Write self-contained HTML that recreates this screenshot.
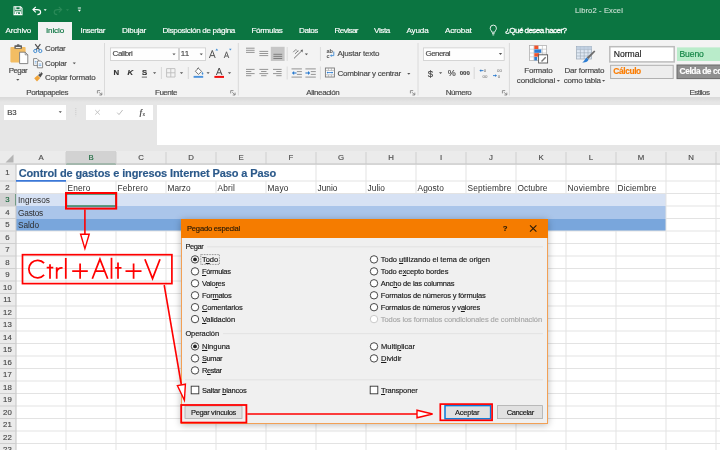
<!DOCTYPE html>
<html><head><meta charset="utf-8"><title>Libro2 - Excel</title>
<style>
html,body{margin:0;padding:0}
body{width:720px;height:450px;overflow:hidden;position:relative;background:#e6e6e6;font-family:"Liberation Sans",sans-serif}
.a{position:absolute;box-sizing:border-box}
.t{position:absolute;white-space:pre;font-family:"Liberation Sans",sans-serif;z-index:10;-webkit-text-stroke:0.16px}
svg{position:absolute;overflow:visible}

u{text-decoration-thickness:0.6px;text-underline-offset:0.8px}
.c{-webkit-text-stroke:0}

</style></head>
<body>
<!-- title bar + tabs -->
<div class="a" style="left:0;top:0;width:720px;height:40px;background:#0b7541"></div>
<div class="a" style="left:38px;top:21.5px;width:34px;height:19px;background:#f3f3f3"></div>
<!-- ribbon -->
<div class="a" style="left:0;top:40px;width:720px;height:56.5px;background:#f3f3f3"></div>
<div class="a" style="left:0;top:96.5px;width:720px;height:5px;background:linear-gradient(#d9d9d9,#dedede 50%,#e6e6e6)"></div>
<!-- formula bar -->
<div class="a" style="left:4px;top:104.5px;width:62px;height:15.5px;background:#fff"></div>
<div class="a" style="left:86px;top:104.5px;width:67px;height:15.5px;background:#fff"></div>
<div class="a" style="left:157px;top:104.5px;width:563px;height:40.5px;background:#fff"></div>
<!-- grid -->
<div class="a" id="grid" style="left:0;top:151px;width:720px;height:299px;background:#fff"></div>
<div class="a" style="left:0;top:151px;width:720px;height:13.5px;background:#ebebeb"></div>
<div class="a" style="left:0;top:151px;width:16px;height:299px;background:#ebebeb"></div>
<div class="a" style="left:66px;top:151px;width:50px;height:13.5px;background:#d2d2d2;border-bottom:2px solid #217346"></div>
<div class="a" style="left:0;top:193.5px;width:16px;height:12.5px;background:#d2d2d2;border-right:1.5px solid #217346"></div>
<div class="a" style="left:16px;top:193.5px;width:650px;height:12.5px;background:#d7e2f4"></div>
<div class="a" style="left:16px;top:206px;width:650px;height:12.5px;background:#aac5ea"></div>
<div class="a" style="left:16px;top:218.5px;width:650px;height:12.5px;background:#79a6dc"></div>
<svg width="720" height="450" style="left:0;top:0"><path d="M16 164H720" stroke="#e3e3e3"/><path d="M16 181H720" stroke="#e3e3e3"/><path d="M16 193.5H720" stroke="#e3e3e3"/><path d="M666 206.0H720" stroke="#e3e3e3"/><path d="M666 218.5H720" stroke="#e3e3e3"/><path d="M16 231.0H720" stroke="#e3e3e3"/><path d="M16 243.5H720" stroke="#e3e3e3"/><path d="M16 256.0H720" stroke="#e3e3e3"/><path d="M16 268.5H720" stroke="#e3e3e3"/><path d="M16 281.0H720" stroke="#e3e3e3"/><path d="M16 293.5H720" stroke="#e3e3e3"/><path d="M16 306.0H720" stroke="#e3e3e3"/><path d="M16 318.5H720" stroke="#e3e3e3"/><path d="M16 331.0H720" stroke="#e3e3e3"/><path d="M16 343.5H720" stroke="#e3e3e3"/><path d="M16 356.0H720" stroke="#e3e3e3"/><path d="M16 368.5H720" stroke="#e3e3e3"/><path d="M16 381.0H720" stroke="#e3e3e3"/><path d="M16 393.5H720" stroke="#e3e3e3"/><path d="M16 406.0H720" stroke="#e3e3e3"/><path d="M16 418.5H720" stroke="#e3e3e3"/><path d="M16 431.0H720" stroke="#e3e3e3"/><path d="M16 443.5H720" stroke="#e3e3e3"/><path d="M16 456.0H720" stroke="#e3e3e3"/><path d="M16 164V450" stroke="#c4c4c4"/><path d="M66 181V193.5M66 231V450" stroke="#e3e3e3"/><path d="M116 181V193.5M116 231V450" stroke="#e3e3e3"/><path d="M166 181V193.5M166 231V450" stroke="#e3e3e3"/><path d="M216 181V193.5M216 231V450" stroke="#e3e3e3"/><path d="M266 181V193.5M266 231V450" stroke="#e3e3e3"/><path d="M316 164V193.5M316 231V450" stroke="#e3e3e3"/><path d="M366 164V193.5M366 231V450" stroke="#e3e3e3"/><path d="M416 164V193.5M416 231V450" stroke="#e3e3e3"/><path d="M466 164V193.5M466 231V450" stroke="#e3e3e3"/><path d="M516 164V193.5M516 231V450" stroke="#e3e3e3"/><path d="M566 164V193.5M566 231V450" stroke="#e3e3e3"/><path d="M616 164V193.5M616 231V450" stroke="#e3e3e3"/><path d="M666 164V450" stroke="#e3e3e3"/><path d="M716 164V450" stroke="#e3e3e3"/><path d="M66 152V164" stroke="#cfcfcf"/><path d="M116 152V164" stroke="#cfcfcf"/><path d="M166 152V164" stroke="#cfcfcf"/><path d="M216 152V164" stroke="#cfcfcf"/><path d="M266 152V164" stroke="#cfcfcf"/><path d="M316 152V164" stroke="#cfcfcf"/><path d="M366 152V164" stroke="#cfcfcf"/><path d="M416 152V164" stroke="#cfcfcf"/><path d="M466 152V164" stroke="#cfcfcf"/><path d="M516 152V164" stroke="#cfcfcf"/><path d="M566 152V164" stroke="#cfcfcf"/><path d="M616 152V164" stroke="#cfcfcf"/><path d="M666 152V164" stroke="#cfcfcf"/><path d="M716 152V164" stroke="#cfcfcf"/><path d="M0 181H16" stroke="#cfcfcf"/><path d="M0 193.5H16" stroke="#cfcfcf"/><path d="M0 206.0H16" stroke="#cfcfcf"/><path d="M0 218.5H16" stroke="#cfcfcf"/><path d="M0 231.0H16" stroke="#cfcfcf"/><path d="M0 243.5H16" stroke="#cfcfcf"/><path d="M0 256.0H16" stroke="#cfcfcf"/><path d="M0 268.5H16" stroke="#cfcfcf"/><path d="M0 281.0H16" stroke="#cfcfcf"/><path d="M0 293.5H16" stroke="#cfcfcf"/><path d="M0 306.0H16" stroke="#cfcfcf"/><path d="M0 318.5H16" stroke="#cfcfcf"/><path d="M0 331.0H16" stroke="#cfcfcf"/><path d="M0 343.5H16" stroke="#cfcfcf"/><path d="M0 356.0H16" stroke="#cfcfcf"/><path d="M0 368.5H16" stroke="#cfcfcf"/><path d="M0 381.0H16" stroke="#cfcfcf"/><path d="M0 393.5H16" stroke="#cfcfcf"/><path d="M0 406.0H16" stroke="#cfcfcf"/><path d="M0 418.5H16" stroke="#cfcfcf"/><path d="M0 431.0H16" stroke="#cfcfcf"/><path d="M0 443.5H16" stroke="#cfcfcf"/><path d="M0 456.0H16" stroke="#cfcfcf"/><path d="M0 164H720" stroke="#c4c4c4"/><path d="M13.5 154.5V162.5H5.5Z" fill="#b4b4b4"/><path d="M16 180.8H66" stroke="#3b78d8" stroke-width="1.8"/><rect x="66.5" y="194" width="49.5" height="12" fill="none" stroke="#217346" stroke-width="1.3"/></svg>
<div class="a" style="left:181px;top:218.5px;width:366.5px;height:205.5px;background:#f0f0f0;border:1px solid #f2a055;box-shadow:0 1px 7px rgba(0,0,0,.28)"></div>
<div class="a" style="left:181px;top:218.5px;width:366.5px;height:19px;background:#f57c00"></div>
<svg width="720" height="450" style="left:0;top:0"><path d="M207 246.8H543M223 333.7H543M185 379.8H543" stroke="#e2e2e2"/><circle cx="195" cy="259.4" r="3.7" fill="#fff" stroke="#333" stroke-width="0.9"/><circle cx="195" cy="259.4" r="1.9" fill="#222"/><circle cx="374" cy="259.4" r="3.7" fill="#fff" stroke="#333" stroke-width="0.9"/><circle cx="195" cy="271.4" r="3.7" fill="#fff" stroke="#333" stroke-width="0.9"/><circle cx="374" cy="271.4" r="3.7" fill="#fff" stroke="#333" stroke-width="0.9"/><circle cx="195" cy="283.3" r="3.7" fill="#fff" stroke="#333" stroke-width="0.9"/><circle cx="374" cy="283.3" r="3.7" fill="#fff" stroke="#333" stroke-width="0.9"/><circle cx="195" cy="295.3" r="3.7" fill="#fff" stroke="#333" stroke-width="0.9"/><circle cx="374" cy="295.3" r="3.7" fill="#fff" stroke="#333" stroke-width="0.9"/><circle cx="195" cy="307.2" r="3.7" fill="#fff" stroke="#333" stroke-width="0.9"/><circle cx="374" cy="307.2" r="3.7" fill="#fff" stroke="#333" stroke-width="0.9"/><circle cx="195" cy="319.1" r="3.7" fill="#fff" stroke="#333" stroke-width="0.9"/><circle cx="374" cy="319.1" r="3.7" fill="#fff" stroke="#c4c4c4" stroke-width="0.9"/><circle cx="195" cy="346.4" r="3.7" fill="#fff" stroke="#333" stroke-width="0.9"/><circle cx="195" cy="346.4" r="1.9" fill="#222"/><circle cx="374" cy="346.4" r="3.7" fill="#fff" stroke="#333" stroke-width="0.9"/><circle cx="195" cy="358.4" r="3.7" fill="#fff" stroke="#333" stroke-width="0.9"/><circle cx="374" cy="358.4" r="3.7" fill="#fff" stroke="#333" stroke-width="0.9"/><circle cx="195" cy="370.4" r="3.7" fill="#fff" stroke="#333" stroke-width="0.9"/><rect x="191.2" y="386.2" width="7.6" height="7.6" fill="#fff" stroke="#333" stroke-width="0.9"/><rect x="370.2" y="386.2" width="7.6" height="7.6" fill="#fff" stroke="#333" stroke-width="0.9"/><rect x="200.8" y="254.6" width="18.6" height="9.8" fill="none" stroke="#555" stroke-width="0.7" stroke-dasharray="0.8 0.8"/><rect x="185" y="406" width="57" height="12.5" fill="#e1e1e1" stroke="#adadad" stroke-width="0.8"/><rect x="445" y="405.6" width="45.6" height="13.2" fill="#e1e1e1" stroke="#0a78d7" stroke-width="1.5"/><rect x="497.5" y="405.6" width="45" height="13" fill="#e1e1e1" stroke="#adadad" stroke-width="0.8"/><path d="M530 225.3l6.4 6.4M536.4 225.3l-6.4 6.4" stroke="#2a1a08" stroke-width="1.1"/></svg>
<div class="a" id="tx" style="left:0;top:0;width:720px;height:450px;z-index:10;will-change:transform;opacity:0.999">
<span class="t" style="left:575.00px;top:2.50px;height:15px;line-height:15px;font-size:7.5px;color:#c9dfd2;letter-spacing:0.153px;">Libro2 - Excel</span>
<span class="t" style="left:5.50px;top:22.50px;height:16px;line-height:16px;font-size:8.1px;color:#ffffff;letter-spacing:-0.186px;">Archivo</span>
<span class="t" style="left:46.00px;top:22.50px;height:16px;line-height:16px;font-size:8.1px;color:#0b7541;letter-spacing:-0.151px;">Inicio</span>
<span class="t" style="left:80.50px;top:22.50px;height:16px;line-height:16px;font-size:8.1px;color:#ffffff;letter-spacing:-0.369px;">Insertar</span>
<span class="t" style="left:122.00px;top:22.50px;height:16px;line-height:16px;font-size:8.1px;color:#ffffff;letter-spacing:-0.237px;">Dibujar</span>
<span class="t" style="left:162.50px;top:22.50px;height:16px;line-height:16px;font-size:8.1px;color:#ffffff;letter-spacing:-0.319px;">Disposición de página</span>
<span class="t" style="left:251.50px;top:22.50px;height:16px;line-height:16px;font-size:8.1px;color:#ffffff;letter-spacing:-0.342px;">Fórmulas</span>
<span class="t" style="left:299.00px;top:22.50px;height:16px;line-height:16px;font-size:8.1px;color:#ffffff;letter-spacing:-0.431px;">Datos</span>
<span class="t" style="left:334.50px;top:22.50px;height:16px;line-height:16px;font-size:8.1px;color:#ffffff;letter-spacing:-0.562px;">Revisar</span>
<span class="t" style="left:374.00px;top:22.50px;height:16px;line-height:16px;font-size:8.1px;color:#ffffff;letter-spacing:-0.372px;">Vista</span>
<span class="t" style="left:406.50px;top:22.50px;height:16px;line-height:16px;font-size:8.1px;color:#ffffff;letter-spacing:-0.163px;">Ayuda</span>
<span class="t" style="left:445.00px;top:22.50px;height:16px;line-height:16px;font-size:8.1px;color:#ffffff;letter-spacing:-0.201px;">Acrobat</span>
<span class="t" style="left:505.00px;top:22.50px;height:16px;line-height:16px;font-size:8.1px;color:#ffffff;letter-spacing:-0.591px;-webkit-text-stroke:0.3px;">¿Qué desea hacer?</span>
<span class="t" style="left:45.00px;top:41.30px;height:16px;line-height:16px;font-size:8px;color:#474747;letter-spacing:-0.289px;">Cortar</span>
<span class="t" style="left:45.00px;top:55.80px;height:16px;line-height:16px;font-size:8px;color:#474747;letter-spacing:-0.313px;">Copiar</span>
<span class="t" style="left:45.00px;top:70.00px;height:16px;line-height:16px;font-size:8px;color:#474747;letter-spacing:-0.173px;">Copiar formato</span>
<span class="t" style="left:8.80px;top:62.50px;height:16px;line-height:16px;font-size:8px;color:#474747;letter-spacing:-0.632px;">Pegar</span>
<span class="t" style="left:26.30px;top:84.50px;height:16px;line-height:16px;font-size:8px;color:#474747;letter-spacing:-0.455px;">Portapapeles</span>
<span class="t" style="left:155.00px;top:84.50px;height:16px;line-height:16px;font-size:8px;color:#474747;letter-spacing:-0.484px;">Fuente</span>
<span class="t" style="left:306.30px;top:84.50px;height:16px;line-height:16px;font-size:8px;color:#474747;letter-spacing:-0.392px;">Alineación</span>
<span class="t" style="left:445.80px;top:84.50px;height:16px;line-height:16px;font-size:8px;color:#474747;letter-spacing:-0.492px;">Número</span>
<span class="t" style="left:689.50px;top:84.50px;height:16px;line-height:16px;font-size:8px;color:#474747;letter-spacing:-0.509px;">Estilos</span>
<span class="t" style="left:112.50px;top:46.30px;height:16px;line-height:16px;font-size:8px;color:#474747;letter-spacing:-0.382px;">Calibri</span>
<span class="t" style="left:180.84px;top:46.30px;height:16px;line-height:16px;font-size:8px;color:#474747;letter-spacing:0.000px;">11</span>
<span class="t" style="left:113.43px;top:65.00px;height:16px;line-height:16px;font-size:7.8px;color:#333;letter-spacing:0.000px;font-weight:bold;">N</span>
<span class="t" style="left:127.43px;top:65.00px;height:16px;line-height:16px;font-size:7.8px;color:#333;letter-spacing:0.000px;font-weight:bold;font-style:italic;">K</span>
<span class="t" style="left:141.90px;top:64.60px;height:16px;line-height:16px;font-size:7.8px;color:#333;letter-spacing:0.000px;font-weight:bold;">S</span>
<span class="t" style="left:337.50px;top:46.30px;height:16px;line-height:16px;font-size:8px;color:#474747;letter-spacing:-0.205px;">Ajustar texto</span>
<span class="t" style="left:337.50px;top:65.70px;height:16px;line-height:16px;font-size:8px;color:#474747;letter-spacing:-0.263px;">Combinar y centrar</span>
<span class="t" style="left:425.50px;top:46.30px;height:16px;line-height:16px;font-size:8px;color:#474747;letter-spacing:-0.567px;">General</span>
<span class="t" style="left:427.85px;top:63.50px;height:19px;line-height:19px;font-size:9.5px;color:#444;letter-spacing:0.000px;">$</span>
<span class="t" style="left:447.74px;top:64.00px;height:18px;line-height:18px;font-size:9px;color:#444;letter-spacing:0.000px;">%</span>
<span class="t" style="left:459.74px;top:66.50px;height:12px;line-height:12px;font-size:6px;color:#444;letter-spacing:0.000px;font-weight:bold;">000</span>
<span class="t" style="left:524.30px;top:62.50px;height:16px;line-height:16px;font-size:8px;color:#474747;letter-spacing:-0.228px;">Formato</span>
<span class="t" style="left:516.80px;top:72.50px;height:16px;line-height:16px;font-size:8px;color:#474747;letter-spacing:-0.166px;">condicional</span>
<span class="t" style="left:564.50px;top:62.50px;height:16px;line-height:16px;font-size:8px;color:#474747;letter-spacing:-0.221px;">Dar formato</span>
<span class="t" style="left:563.80px;top:72.50px;height:16px;line-height:16px;font-size:8px;color:#474747;letter-spacing:-0.214px;">como tabla</span>
<span class="t" style="left:613.80px;top:45.80px;height:17px;line-height:17px;font-size:8.6px;color:#222;letter-spacing:-0.034px;">Normal</span>
<span class="t" style="left:679.50px;top:45.80px;height:17px;line-height:17px;font-size:8.6px;color:#128445;letter-spacing:-0.112px;">Bueno</span>
<span class="t" style="left:613.30px;top:63.30px;height:17px;line-height:17px;font-size:8.4px;color:#fa7d00;letter-spacing:-0.393px;font-weight:bold;">Cálculo</span>
<span class="t" style="left:679.50px;top:63.30px;height:17px;line-height:17px;font-size:8.4px;color:#ffffff;letter-spacing:-0.411px;font-weight:bold;">Celda de co</span>
<span class="t" style="left:7.13px;top:105.00px;height:16px;line-height:16px;font-size:7.8px;color:#444;letter-spacing:0.000px;">B3</span>
<span class="t" style="left:38.40px;top:149.60px;height:16px;line-height:16px;font-size:7.8px;color:#4c4c4c;letter-spacing:0.000px;">A</span>
<span class="t" style="left:88.40px;top:149.60px;height:16px;line-height:16px;font-size:7.8px;color:#1e6b41;letter-spacing:0.000px;">B</span>
<span class="t" style="left:138.18px;top:149.60px;height:16px;line-height:16px;font-size:7.8px;color:#4c4c4c;letter-spacing:0.000px;">C</span>
<span class="t" style="left:188.18px;top:149.60px;height:16px;line-height:16px;font-size:7.8px;color:#4c4c4c;letter-spacing:0.000px;">D</span>
<span class="t" style="left:238.40px;top:149.60px;height:16px;line-height:16px;font-size:7.8px;color:#4c4c4c;letter-spacing:0.000px;">E</span>
<span class="t" style="left:288.62px;top:149.60px;height:16px;line-height:16px;font-size:7.8px;color:#4c4c4c;letter-spacing:0.000px;">F</span>
<span class="t" style="left:337.96px;top:149.60px;height:16px;line-height:16px;font-size:7.8px;color:#4c4c4c;letter-spacing:0.000px;">G</span>
<span class="t" style="left:388.18px;top:149.60px;height:16px;line-height:16px;font-size:7.8px;color:#4c4c4c;letter-spacing:0.000px;">H</span>
<span class="t" style="left:439.91px;top:149.60px;height:16px;line-height:16px;font-size:7.8px;color:#4c4c4c;letter-spacing:0.000px;">I</span>
<span class="t" style="left:489.05px;top:149.60px;height:16px;line-height:16px;font-size:7.8px;color:#4c4c4c;letter-spacing:0.000px;">J</span>
<span class="t" style="left:538.40px;top:149.60px;height:16px;line-height:16px;font-size:7.8px;color:#4c4c4c;letter-spacing:0.000px;">K</span>
<span class="t" style="left:588.83px;top:149.60px;height:16px;line-height:16px;font-size:7.8px;color:#4c4c4c;letter-spacing:0.000px;">L</span>
<span class="t" style="left:637.75px;top:149.60px;height:16px;line-height:16px;font-size:7.8px;color:#4c4c4c;letter-spacing:0.000px;">M</span>
<span class="t" style="left:688.18px;top:149.60px;height:16px;line-height:16px;font-size:7.8px;color:#4c4c4c;letter-spacing:0.000px;">N</span>
<span class="t" style="left:5.23px;top:165.20px;height:16px;line-height:16px;font-size:7.8px;color:#4c4c4c;letter-spacing:0.000px;">1</span>
<span class="t" style="left:5.23px;top:179.60px;height:16px;line-height:16px;font-size:7.8px;color:#4c4c4c;letter-spacing:0.000px;">2</span>
<span class="t" style="left:5.23px;top:192.10px;height:16px;line-height:16px;font-size:7.8px;color:#1e6b41;letter-spacing:0.000px;">3</span>
<span class="t" style="left:5.23px;top:204.60px;height:16px;line-height:16px;font-size:7.8px;color:#4c4c4c;letter-spacing:0.000px;">4</span>
<span class="t" style="left:5.23px;top:217.10px;height:16px;line-height:16px;font-size:7.8px;color:#4c4c4c;letter-spacing:0.000px;">5</span>
<span class="t" style="left:5.23px;top:229.60px;height:16px;line-height:16px;font-size:7.8px;color:#4c4c4c;letter-spacing:0.000px;">6</span>
<span class="t" style="left:5.23px;top:242.10px;height:16px;line-height:16px;font-size:7.8px;color:#4c4c4c;letter-spacing:0.000px;">7</span>
<span class="t" style="left:5.23px;top:254.60px;height:16px;line-height:16px;font-size:7.8px;color:#4c4c4c;letter-spacing:0.000px;">8</span>
<span class="t" style="left:5.23px;top:267.10px;height:16px;line-height:16px;font-size:7.8px;color:#4c4c4c;letter-spacing:0.000px;">9</span>
<span class="t" style="left:3.06px;top:279.60px;height:16px;line-height:16px;font-size:7.8px;color:#4c4c4c;letter-spacing:0.000px;">10</span>
<span class="t" style="left:3.35px;top:292.10px;height:16px;line-height:16px;font-size:7.8px;color:#4c4c4c;letter-spacing:0.000px;">11</span>
<span class="t" style="left:3.06px;top:304.60px;height:16px;line-height:16px;font-size:7.8px;color:#4c4c4c;letter-spacing:0.000px;">12</span>
<span class="t" style="left:3.06px;top:317.10px;height:16px;line-height:16px;font-size:7.8px;color:#4c4c4c;letter-spacing:0.000px;">13</span>
<span class="t" style="left:3.06px;top:329.60px;height:16px;line-height:16px;font-size:7.8px;color:#4c4c4c;letter-spacing:0.000px;">14</span>
<span class="t" style="left:3.06px;top:342.10px;height:16px;line-height:16px;font-size:7.8px;color:#4c4c4c;letter-spacing:0.000px;">15</span>
<span class="t" style="left:3.06px;top:354.60px;height:16px;line-height:16px;font-size:7.8px;color:#4c4c4c;letter-spacing:0.000px;">16</span>
<span class="t" style="left:3.06px;top:367.10px;height:16px;line-height:16px;font-size:7.8px;color:#4c4c4c;letter-spacing:0.000px;">17</span>
<span class="t" style="left:3.06px;top:379.60px;height:16px;line-height:16px;font-size:7.8px;color:#4c4c4c;letter-spacing:0.000px;">18</span>
<span class="t" style="left:3.06px;top:392.10px;height:16px;line-height:16px;font-size:7.8px;color:#4c4c4c;letter-spacing:0.000px;">19</span>
<span class="t" style="left:3.06px;top:404.60px;height:16px;line-height:16px;font-size:7.8px;color:#4c4c4c;letter-spacing:0.000px;">20</span>
<span class="t" style="left:3.06px;top:417.10px;height:16px;line-height:16px;font-size:7.8px;color:#4c4c4c;letter-spacing:0.000px;">21</span>
<span class="t" style="left:3.06px;top:429.60px;height:16px;line-height:16px;font-size:7.8px;color:#4c4c4c;letter-spacing:0.000px;">22</span>
<span class="t" style="left:3.06px;top:442.10px;height:16px;line-height:16px;font-size:7.8px;color:#4c4c4c;letter-spacing:0.000px;">23</span>
<span class="t" style="left:18.70px;top:161.80px;height:22px;line-height:22px;font-size:11px;color:#2b598a;letter-spacing:-0.113px;font-weight:bold;">Control de gastos e ingresos Internet Paso a Paso</span>
<span class="t" style="left:67.50px;top:179.80px;height:17px;line-height:17px;font-size:8.3px;color:#2e2e2e;letter-spacing:0.172px;-webkit-text-stroke:0;">Enero</span>
<span class="t" style="left:117.50px;top:179.80px;height:17px;line-height:17px;font-size:8.3px;color:#2e2e2e;letter-spacing:0.205px;-webkit-text-stroke:0;">Febrero</span>
<span class="t" style="left:167.50px;top:179.80px;height:17px;line-height:17px;font-size:8.3px;color:#2e2e2e;letter-spacing:-0.013px;-webkit-text-stroke:0;">Marzo</span>
<span class="t" style="left:217.50px;top:179.80px;height:17px;line-height:17px;font-size:8.3px;color:#2e2e2e;letter-spacing:0.178px;-webkit-text-stroke:0;">Abril</span>
<span class="t" style="left:267.50px;top:179.80px;height:17px;line-height:17px;font-size:8.3px;color:#2e2e2e;letter-spacing:0.176px;-webkit-text-stroke:0;">Mayo</span>
<span class="t" style="left:317.50px;top:179.80px;height:17px;line-height:17px;font-size:8.3px;color:#2e2e2e;letter-spacing:0.031px;-webkit-text-stroke:0;">Junio</span>
<span class="t" style="left:367.50px;top:179.80px;height:17px;line-height:17px;font-size:8.3px;color:#2e2e2e;letter-spacing:0.084px;-webkit-text-stroke:0;">Julio</span>
<span class="t" style="left:417.50px;top:179.80px;height:17px;line-height:17px;font-size:8.3px;color:#2e2e2e;letter-spacing:0.109px;-webkit-text-stroke:0;">Agosto</span>
<span class="t" style="left:467.50px;top:179.80px;height:17px;line-height:17px;font-size:8.3px;color:#2e2e2e;letter-spacing:0.156px;-webkit-text-stroke:0;">Septiembre</span>
<span class="t" style="left:517.50px;top:179.80px;height:17px;line-height:17px;font-size:8.3px;color:#2e2e2e;letter-spacing:0.069px;-webkit-text-stroke:0;">Octubre</span>
<span class="t" style="left:567.50px;top:179.80px;height:17px;line-height:17px;font-size:8.3px;color:#2e2e2e;letter-spacing:0.264px;-webkit-text-stroke:0;">Noviembre</span>
<span class="t" style="left:617.50px;top:179.80px;height:17px;line-height:17px;font-size:8.3px;color:#2e2e2e;letter-spacing:0.182px;-webkit-text-stroke:0;">Diciembre</span>
<span class="t" style="left:18.00px;top:192.10px;height:17px;line-height:17px;font-size:8.3px;color:#2e2e2e;letter-spacing:0.021px;-webkit-text-stroke:0;">Ingresos</span>
<span class="t" style="left:18.00px;top:204.60px;height:17px;line-height:17px;font-size:8.3px;color:#2e2e2e;letter-spacing:-0.216px;-webkit-text-stroke:0;">Gastos</span>
<span class="t" style="left:18.00px;top:217.10px;height:17px;line-height:17px;font-size:8.3px;color:#2e2e2e;letter-spacing:-0.047px;-webkit-text-stroke:0;">Saldo</span>
<span class="t" style="left:187.00px;top:221.10px;height:15px;line-height:15px;font-size:7.6px;color:#2a1a08;letter-spacing:-0.210px;">Pegado especial</span>
<span class="t" style="left:502.87px;top:220.60px;height:16px;line-height:16px;font-size:7.8px;color:#2a1a08;letter-spacing:0.000px;font-weight:bold;">?</span>
<span class="t" style="left:185.40px;top:239.10px;height:15px;line-height:15px;font-size:7.5px;color:#1a1a1a;letter-spacing:-0.403px;">Pegar</span>
<span class="t" style="left:202.00px;top:251.90px;height:15px;line-height:15px;font-size:7.5px;color:#1a1a1a;letter-spacing:-0.066px;">T<u>o</u>do</span>
<span class="t" style="left:202.00px;top:263.90px;height:15px;line-height:15px;font-size:7.5px;color:#1a1a1a;letter-spacing:-0.335px;"><u>F</u>órmulas</span>
<span class="t" style="left:202.00px;top:275.90px;height:15px;line-height:15px;font-size:7.5px;color:#1a1a1a;letter-spacing:-0.270px;">Valo<u>r</u>es</span>
<span class="t" style="left:202.00px;top:287.80px;height:15px;line-height:15px;font-size:7.5px;color:#1a1a1a;letter-spacing:-0.286px;">For<u>m</u>atos</span>
<span class="t" style="left:202.00px;top:299.70px;height:15px;line-height:15px;font-size:7.5px;color:#1a1a1a;letter-spacing:-0.185px;"><u>C</u>omentarios</span>
<span class="t" style="left:202.00px;top:311.60px;height:15px;line-height:15px;font-size:7.5px;color:#1a1a1a;letter-spacing:-0.106px;"><u>V</u>alidación</span>
<span class="t" style="left:185.40px;top:326.00px;height:15px;line-height:15px;font-size:7.5px;color:#1a1a1a;letter-spacing:-0.112px;">Operación</span>
<span class="t" style="left:202.00px;top:338.90px;height:15px;line-height:15px;font-size:7.5px;color:#1a1a1a;letter-spacing:0.007px;"><u>N</u>inguna</span>
<span class="t" style="left:202.00px;top:350.90px;height:15px;line-height:15px;font-size:7.5px;color:#1a1a1a;letter-spacing:-0.422px;"><u>S</u>umar</span>
<span class="t" style="left:202.00px;top:362.90px;height:15px;line-height:15px;font-size:7.5px;color:#1a1a1a;letter-spacing:-0.435px;">R<u>e</u>star</span>
<span class="t" style="left:202.00px;top:382.50px;height:15px;line-height:15px;font-size:7.5px;color:#1a1a1a;letter-spacing:-0.218px;">Saltar <u>b</u>lancos</span>
<span class="t" style="left:191.00px;top:404.70px;height:15px;line-height:15px;font-size:7.5px;color:#1a1a1a;letter-spacing:-0.331px;">Pe<u>g</u>ar vínculos</span>
<span class="t" style="left:380.80px;top:251.90px;height:15px;line-height:15px;font-size:7.5px;color:#1a1a1a;letter-spacing:-0.027px;">Todo <u>u</u>tilizando el tema de origen</span>
<span class="t" style="left:380.80px;top:263.90px;height:15px;line-height:15px;font-size:7.5px;color:#1a1a1a;letter-spacing:-0.113px;">Todo e<u>x</u>cepto bordes</span>
<span class="t" style="left:380.80px;top:275.80px;height:15px;line-height:15px;font-size:7.5px;color:#1a1a1a;letter-spacing:-0.189px;">Anc<u>h</u>o de las columnas</span>
<span class="t" style="left:380.80px;top:287.80px;height:15px;line-height:15px;font-size:7.5px;color:#1a1a1a;letter-spacing:-0.178px;">Formatos de números y fórmu<u>l</u>as</span>
<span class="t" style="left:380.80px;top:299.70px;height:15px;line-height:15px;font-size:7.5px;color:#1a1a1a;letter-spacing:-0.216px;">Formatos de números y v<u>a</u>lores</span>
<span class="t" style="left:380.80px;top:311.60px;height:15px;line-height:15px;font-size:7.5px;color:#a8a8a8;letter-spacing:-0.083px;">Todos los formatos condicionales de combinación</span>
<span class="t" style="left:381.00px;top:338.90px;height:15px;line-height:15px;font-size:7.5px;color:#1a1a1a;letter-spacing:0.020px;">Multi<u>p</u>licar</span>
<span class="t" style="left:381.00px;top:350.90px;height:15px;line-height:15px;font-size:7.5px;color:#1a1a1a;letter-spacing:-0.049px;"><u>D</u>ividir</span>
<span class="t" style="left:381.00px;top:382.50px;height:15px;line-height:15px;font-size:7.5px;color:#1a1a1a;letter-spacing:-0.159px;"><u>T</u>ransponer</span>
<span class="t" style="left:455.00px;top:404.70px;height:15px;line-height:15px;font-size:7.5px;color:#1a1a1a;letter-spacing:-0.223px;">Aceptar</span>
<span class="t" style="left:506.70px;top:404.70px;height:15px;line-height:15px;font-size:7.5px;color:#1a1a1a;letter-spacing:-0.364px;">Cancelar</span>
</div>
<svg width="720" height="450" style="left:0;top:0;z-index:5;will-change:transform;opacity:0.999"><g fill="none" stroke="#fff" stroke-width="1.1"><path d="M14 6.8H20.6L22 8.2V14.6H14Z"/><path d="M15.8 6.8V9.8H20.2V6.8"/><path d="M15.6 14.6V11.8H20.4V14.6" /></g><rect x="16.6" y="12.4" width="1.6" height="2.2" fill="#fff"/><path d="M33.2 9.6H37.2C39.6 9.6 40.6 11 40.6 12.3C40.6 13.6 39.6 14.6 37.4 14.6" fill="none" stroke="#fff" stroke-width="1.2"/><path d="M35.8 6.8L33 9.6L35.8 12.4" fill="none" stroke="#fff" stroke-width="1.2"/><path d="M43.70 9.35H46.70L45.20 11.05Z" fill="#fff"/><path d="M61.4 9.6H57.6C55.2 9.6 54.2 11 54.2 12.3C54.2 13.6 55.2 14.6 57.2 14.6" fill="none" stroke="#2a8a58" stroke-width="1.2"/><path d="M58.8 6.8L61.6 9.6L58.8 12.4" fill="none" stroke="#2a8a58" stroke-width="1.2"/><path d="M66.00 9.35H69.00L67.50 11.05Z" fill="#2a8a58"/><path d="M77.8 8H81" stroke="#fff" stroke-width="0.9"/><path d="M77.80 9.85H81.00L79.40 11.75Z" fill="#fff"/><path d="M491.8 32.2C491.6 30.6 490.2 30 490.2 28.2A3.1 3.1 0 0 1 496.4 28.2C496.4 30 495 30.6 494.8 32.2Z" fill="none" stroke="#fff" stroke-width="0.9"/><path d="M492 33.6H494.6M492.4 34.9H494.2" stroke="#fff" stroke-width="0.8"/><path d="M104.5 43V95.5" stroke="#dadada" stroke-width="1"/><path d="M238.3 43V95.5" stroke="#dadada" stroke-width="1"/><path d="M418 43V95.5" stroke="#dadada" stroke-width="1"/><path d="M509.4 43V95.5" stroke="#dadada" stroke-width="1"/><path d="M97.39999999999999 93.39999999999999V90.6H100.19999999999999" fill="none" stroke="#777" stroke-width="0.8"/><path d="M99.0 92.2L101.6 94.8M101.8 92.6V95.0H99.39999999999999" fill="none" stroke="#777" stroke-width="0.8"/><path d="M230.70000000000002 93.39999999999999V90.6H233.5" fill="none" stroke="#777" stroke-width="0.8"/><path d="M232.3 92.2L234.9 94.8M235.1 92.6V95.0H232.70000000000002" fill="none" stroke="#777" stroke-width="0.8"/><path d="M410.40000000000003 93.39999999999999V90.6H413.20000000000005" fill="none" stroke="#777" stroke-width="0.8"/><path d="M412.0 92.2L414.6 94.8M414.8 92.6V95.0H412.40000000000003" fill="none" stroke="#777" stroke-width="0.8"/><path d="M502.40000000000003 93.39999999999999V90.6H505.20000000000005" fill="none" stroke="#777" stroke-width="0.8"/><path d="M504.0 92.2L506.6 94.8M506.8 92.6V95.0H504.40000000000003" fill="none" stroke="#777" stroke-width="0.8"/><rect x="10.4" y="47" width="15.2" height="15.4" rx="0.8" fill="#f3bd63"/><rect x="14.4" y="45.2" width="7.6" height="3.6" rx="0.6" fill="#606060"/><rect x="16.8" y="44.2" width="2.8" height="2" rx="0.9" fill="#606060"/><rect x="15.8" y="47" width="4.8" height="1" fill="#f3f3f3"/><path d="M19.6 52.2H25.2L27.8 54.8V63.6H19.6Z" fill="#fff" stroke="#7a7a7a" stroke-width="0.9"/><path d="M25.2 52.2V54.8H27.8" fill="none" stroke="#7a7a7a" stroke-width="0.8"/><path d="M16.20 78.90H19.40L17.80 80.70Z" fill="#555"/><path d="M35.2 44.2L39.8 50.2M40.4 44.2L35.8 50.2" stroke="#505050" stroke-width="1.2" fill="none"/><circle cx="35.3" cy="51" r="1.6" fill="none" stroke="#3f8bd2" stroke-width="1"/><circle cx="40.3" cy="51" r="1.6" fill="none" stroke="#3f8bd2" stroke-width="1"/><path d="M33.6 58.6H37L38.6 60.2V65.4H33.6Z" fill="#fff" stroke="#6e6e6e" stroke-width="0.8"/><path d="M37.4 61H40.8L42.6 62.8V67.8H37.4Z" fill="#fff" stroke="#6e6e6e" stroke-width="0.8"/><path d="M34.8 61.4H36.6M34.8 63H36.4M38.6 64H41.4M38.6 65.6H41.4" stroke="#4a90d4" stroke-width="0.7"/><path d="M72.70 62.40H75.90L74.30 64.20Z" fill="#555"/><path d="M34.2 78.2L37.6 75.2L40.2 78L37 81.4Z" fill="#f0a43a"/><path d="M38 75L41.6 72.8L42.6 74L40.4 77.6Z" fill="#4d4d4d"/><path d="M39.2 73.2L40 72.4M41 72.2L42.4 73.6" stroke="#4d4d4d" stroke-width="0.9"/><rect x="110.5" y="47.9" width="68" height="12.5" fill="#fff" stroke="#cdcdcd" stroke-width="0.8"/><rect x="179.6" y="47.9" width="26" height="12.5" fill="#fff" stroke="#cdcdcd" stroke-width="0.8"/><path d="M172.40 53.40H175.60L174.00 55.20Z" fill="#555"/><path d="M199.70 53.40H202.90L201.30 55.20Z" fill="#555"/><path d="M209.4 58L212.3 50.4L215.2 58M210.4 55.6H214.2" fill="none" stroke="#555" stroke-width="1"/><path d="M215.4 50.4L216.8 48.6L218.2 50.4Z" fill="#3f8bd2"/><path d="M224.2 58L226.5 51.8L228.8 58M225 56H228" fill="none" stroke="#555" stroke-width="0.9"/><path d="M229 48.8L230.3 50.5L231.6 48.8Z" fill="#3f8bd2"/><path d="M141.8 77.1H147" stroke="#444" stroke-width="0.8"/><path d="M153.00 72.30H156.20L154.60 74.10Z" fill="#555"/><path d="M161.4 67V79M188.3 67V79" stroke="#d8d8d8" stroke-width="1"/><path d="M166.6 68.6H175V77H166.6ZM170.8 68.6V77M166.6 72.8H175" fill="none" stroke="#bdbdbd" stroke-width="0.9"/><path d="M179.90 72.30H183.10L181.50 74.10Z" fill="#555"/><path d="M195.4 71.2L198.4 68.2L201.6 71.4L198.4 74.4Z" fill="#fff" stroke="#666" stroke-width="0.9"/><path d="M197 69L198.6 67.4" stroke="#666" stroke-width="0.8"/><path d="M202.4 72.2C203.2 73.4 203.4 74 202.6 74.6C201.8 74 201.8 73.2 202.4 72.2Z" fill="#3f8bd2" stroke="#3f8bd2" stroke-width="0.5"/><rect x="193.6" y="75.9" width="9.6" height="1.9" fill="#4a92dc"/><path d="M206.50 72.30H209.70L208.10 74.10Z" fill="#555"/><path d="M216.4 75L219.2 68L222 75M217.4 72.8H221" fill="none" stroke="#4a4a4a" stroke-width="1"/><rect x="214.4" y="75.9" width="9.6" height="2" fill="#f20d0d"/><path d="M227.90 72.30H231.10L229.50 74.10Z" fill="#555"/><path d="M246 48.2H254.6M246 50.3H254.6M246 52.4H254.6" stroke="#8a8a8a" stroke-width="0.9"/><path d="M259.4 51.4H268.2M259.4 53.5H268.2M259.4 55.6H268.2" stroke="#8a8a8a" stroke-width="0.9"/><rect x="270.8" y="46.8" width="13.8" height="14.2" fill="#c6c6c6"/><path d="M273.4 54.3H282.2M273.4 56.4H282.2M273.4 58.5H282.2" stroke="#777" stroke-width="0.9"/><path d="M287.2 47V61M320.4 47V61M287.2 66.5V79.5M320.4 66.5V79.5" stroke="#dcdcdc" stroke-width="1"/><path d="M294 58.4L302.6 50" stroke="#666" stroke-width="0.9"/><path d="M302.8 49.8L302.6 52.4L300.4 50Z" fill="#666"/><path d="M293.2 52.2L296.2 49.2M295 53.8L298.4 50.6M296.8 50.4L298 51.6" stroke="#666" stroke-width="0.8" fill="none"/><path d="M304.80 53.40H308.00L306.40 55.20Z" fill="#555"/><text x="326.4" y="53" font-family="Liberation Sans" font-size="5.6" font-weight="bold" fill="#555">ab</text><text x="326.6" y="58.2" font-family="Liberation Sans" font-size="5.6" font-weight="bold" fill="#555">c</text><path d="M333.8 51.6V55.6H331.2" fill="none" stroke="#3f8bd2" stroke-width="0.9"/><path d="M331.6 54.2L330 55.6L331.6 57Z" fill="#3f8bd2"/><path d="M246.0 69.4H254.6M246.0 71.5H251.3M246.0 73.6H254.6M246.0 75.7H251.3" stroke="#8a8a8a" stroke-width="0.9"/><path d="M259.4 69.4H268.2M261.1 71.5H266.5M259.4 73.6H268.2M261.1 75.7H266.5" stroke="#8a8a8a" stroke-width="0.9"/><path d="M273.0 69.4H281.6M276.3 71.5H281.6M273.0 73.6H281.6M276.3 75.7H281.6" stroke="#8a8a8a" stroke-width="0.9"/><path d="M291.5 68.9H301.9M291.5 77.1H301.9" stroke="#8a8a8a" stroke-width="0.9"/><path d="M296.9 71.6H301.9M296.9 74.4H301.9" stroke="#8a8a8a" stroke-width="0.9"/><path d="M296.5 73H292.9" stroke="#2a7bd0" stroke-width="1.1"/><path d="M294.1 71L291.9 73L294.1 75Z" fill="#2a7bd0"/><path d="M305.4 68.9H315.79999999999995M305.4 77.1H315.79999999999995" stroke="#8a8a8a" stroke-width="0.9"/><path d="M310.79999999999995 71.6H315.79999999999995M310.79999999999995 74.4H315.79999999999995" stroke="#8a8a8a" stroke-width="0.9"/><path d="M305.4 73H308.79999999999995" stroke="#2a7bd0" stroke-width="1.1"/><path d="M308.0 71L310.2 73L308.0 75Z" fill="#2a7bd0"/><rect x="325.4" y="68" width="9" height="9" fill="#fff" stroke="#777" stroke-width="0.9"/><path d="M325.4 70.4H334.4M325.4 74.8H334.4M328.4 68V70.4M331.4 68V70.4M328.4 74.8V77M331.4 74.8V77" stroke="#9a9a9a" stroke-width="0.6" fill="none"/><path d="M327.4 72.6H332.4" stroke="#2a7bd0" stroke-width="0.9"/><path d="M328 71.4L326.6 72.6L328 73.8ZM331.8 71.4L333.2 72.6L331.8 73.8Z" fill="#2a7bd0"/><path d="M407.20 73.00H410.40L408.80 74.80Z" fill="#555"/><rect x="423.4" y="47.9" width="80.8" height="12.5" fill="#fff" stroke="#cdcdcd" stroke-width="0.8"/><path d="M498.90 53.10H502.10L500.50 54.90Z" fill="#555"/><path d="M439.00 72.30H442.20L440.60 74.10Z" fill="#555"/><path d="M474.2 67V79" stroke="#d8d8d8" stroke-width="1"/><text x="483.79999999999995" y="72.2" font-family="Liberation Sans" font-size="4.4" fill="#666">0</text><text x="482.59999999999997" y="77.6" font-family="Liberation Sans" font-size="4.4" fill="#666">00</text><path d="M483.4 70.6H480.2" stroke="#2a7bd0" stroke-width="0.9"/><path d="M481.2 69.2L479.4 70.6L481.2 72Z" fill="#2a7bd0"/><text x="497.0" y="72.2" font-family="Liberation Sans" font-size="4.4" fill="#666">00</text><text x="497.8" y="77.6" font-family="Liberation Sans" font-size="4.4" fill="#666">0</text><path d="M493.0 75.6H496.0" stroke="#2a7bd0" stroke-width="0.9"/><path d="M495.20000000000005 74.2L497.0 75.6L495.20000000000005 77Z" fill="#2a7bd0"/><rect x="529.6" y="45.4" width="17" height="15.2" fill="#fff" stroke="#a8a8a8" stroke-width="0.7"/><path d="M529.6 49.2H546.6M529.6 53H546.6M529.6 56.8H546.6M533.9 45.4V60.6M538.1 45.4V60.6M542.4 45.4V60.6" stroke="#b8b8b8" stroke-width="0.6"/><rect x="534.3" y="45.6" width="4" height="3.4" fill="#f0522a"/><rect x="534.3" y="49.4" width="7" height="3.4" fill="#2d7dd2"/><rect x="534.3" y="53.2" width="4.8" height="3.4" fill="#f0522a"/><rect x="534.3" y="57" width="2.8" height="3.4" fill="#2d7dd2"/><rect x="538.6" y="54.8" width="9" height="8.2" fill="#fff" stroke="#555" stroke-width="0.9"/><path d="M541 61L545.2 56.8L546.2 57.8L542 62Z" fill="#777"/><path d="M556.80 79.90H560.00L558.40 81.70Z" fill="#555"/><rect x="576.6" y="46.4" width="15" height="12.6" fill="#dfe8f3" stroke="#9aa7b6" stroke-width="0.7"/><path d="M576.6 49.6H591.6M576.6 52.8H591.6M576.6 56H591.6M580.4 46.4V59M584.2 46.4V59M588 46.4V59" stroke="#9aa7b6" stroke-width="0.6"/><rect x="576.6" y="46.4" width="15" height="3.2" fill="#b9c9dc" opacity="0.8"/><path d="M594.2 50.4L595.4 51.6L588.4 59L586.6 57.6Z" fill="#6e6e6e"/><path d="M586.4 57.6L588.6 59.4C588 61.6 585.4 62.8 582.2 62.4C584.2 61.4 584.8 59.6 586.4 57.6Z" fill="#2d7dd2"/><path d="M602.00 79.90H605.20L603.60 81.70Z" fill="#555"/><rect x="609.8" y="46.7" width="64.4" height="15.2" fill="#fff" stroke="#bcbcbc" stroke-width="1.5"/><rect x="677" y="47.4" width="46" height="13.6" fill="#b9ecca"/><rect x="610.6" y="65.3" width="62.6" height="13.2" fill="#ededed" stroke="#b0b0b0" stroke-width="1"/><rect x="677" y="65" width="46" height="13.6" fill="#909090" stroke="#6a6a6a" stroke-width="1"/><path d="M58.70 111.30H61.90L60.30 113.10Z" fill="#555"/><path d="M75.8 108.2V116.4" stroke="#c4c4c4" stroke-width="0.9" stroke-dasharray="0.9 1.1"/><path d="M95.2 110L99.8 114.6M99.8 110L95.2 114.6" stroke="#bdbdbd" stroke-width="0.9"/><path d="M117.2 112.6L119 114.6L122.6 110" stroke="#bdbdbd" stroke-width="1" fill="none"/><text x="139.4" y="115.4" font-family="Liberation Serif" font-style="italic" font-weight="bold" font-size="8.4" fill="#555">f</text><text x="142.6" y="115.8" font-family="Liberation Sans" font-size="4.6" font-weight="bold" fill="#555">x</text></svg>
<svg width="720" height="450" style="left:0;top:0;z-index:20"><rect x="66" y="193" width="50.2" height="15.6" fill="none" stroke="#ff0000" stroke-width="2"/><path d="M84.9 209.6V234" stroke="#ff0000" stroke-width="1.6" fill="none"/><path d="M80.6 234.3H89.2L84.9 248.6Z" stroke="#ff0000" stroke-width="1.4" fill="#fff" stroke-linejoin="miter"/><rect x="22.5" y="254.7" width="149.4" height="28.9" fill="none" stroke="#ff0000" stroke-width="1.7"/><path d="M164.2 285L181.3 384.5" stroke="#ff0000" stroke-width="1.6" fill="none"/><path d="M177.4 385.6L185.4 384.2L184.4 400.2Z" stroke="#ff0000" stroke-width="1.4" fill="#fff"/><rect x="181.2" y="405" width="65.2" height="17.6" fill="none" stroke="#ff0000" stroke-width="1.8"/><path d="M247.3 414H417" stroke="#ff0000" stroke-width="1.5" fill="none"/><path d="M417 410.2V417.8L432.6 414Z" stroke="#ff0000" stroke-width="1.4" fill="#fff"/><rect x="440.3" y="404.1" width="51.8" height="16.2" fill="none" stroke="#ff0000" stroke-width="1.7"/><path d="M44.10 263.20A8.75 8.75 0 1 0 44.10 274.90M50 264.2V278.7M46.7 267.6H53.3M56.7 267.2V278.7M56.7 272.2C56.9 269 59.5 267.6 62.6 268M65.8 258V278.7M72.2 271.2H87.8M80.1 263.6V278.7M92.3 278.7L99.95 259.2L107.7 278.7M95.3 271.2H104.7M111.5 257.8V278.7M118 262.5V278.7M115.2 267.9H121.5M125.5 271.2H141.5M133.6 263.5V278.7M144.9 259.2L152.55 278.6L160 259.2" fill="none" stroke="#ff0000" stroke-width="1.75" stroke-linejoin="miter" stroke-miterlimit="10"/></svg>

</body></html>
